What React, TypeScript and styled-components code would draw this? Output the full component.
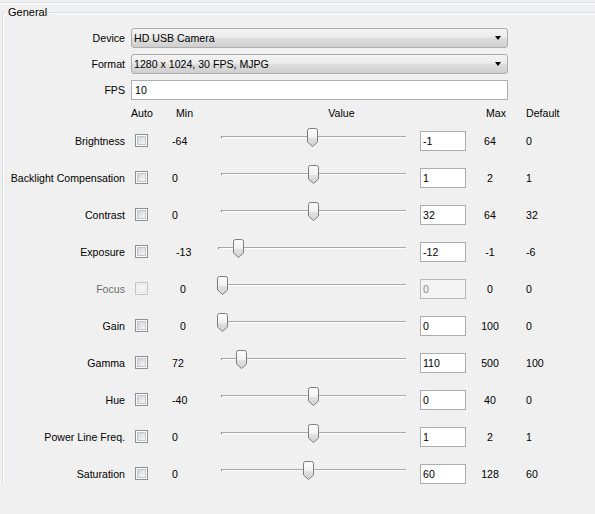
import styled, { createGlobalStyle } from "styled-components";

interface Control {
  label: string;
  min: number;
  value: number;
  max: number;
  def: number;
  disabled?: boolean;
  minPad?: number;
  trackStart?: number;
}

const controls: Control[] = [
  { label: "Brightness", min: -64, value: -1, max: 64, def: 0 },
  { label: "Backlight Compensation", min: 0, value: 1, max: 2, def: 1 },
  { label: "Contrast", min: 0, value: 32, max: 64, def: 32 },
  { label: "Exposure", min: -13, value: -12, max: -1, def: -6, minPad: 10, trackStart: 1 },
  { label: "Focus", min: 0, value: 0, max: 0, def: 0, disabled: true, minPad: 14, trackStart: 0 },
  { label: "Gain", min: 0, value: 0, max: 100, def: 0, minPad: 14, trackStart: 0 },
  { label: "Gamma", min: 72, value: 110, max: 500, def: 100 },
  { label: "Hue", min: -40, value: 0, max: 40, def: 0 },
  { label: "Power Line Freq.", min: 0, value: 1, max: 2, def: 1 },
  { label: "Saturation", min: 0, value: 60, max: 128, def: 60 },
];

const COLUMNS = "128px 35px 51px 203px 46px 48px 1fr";
const SLIDER_CELL = 203;
const SLIDER_RIGHT = 14;
const THUMB_W = 11;

const Thumb = () => (
  <svg width="11" height="19" viewBox="0 0 11 19">
    <defs>
      <linearGradient id="thumbFill" x1="0" y1="0" x2="0" y2="1">
        <stop offset="0" stopColor="#fdfdfd" />
        <stop offset="0.5" stopColor="#f1f1f1" />
        <stop offset="0.56" stopColor="#e0e0e0" />
        <stop offset="1" stopColor="#d2d2d2" />
      </linearGradient>
    </defs>
    <path
      d="M0.5 2.5 Q0.5 0.5 2.5 0.5 H8.5 Q10.5 0.5 10.5 2.5 V14 L5.5 18.5 L0.5 14 Z"
      fill="url(#thumbFill)"
      stroke="#7c7c7c"
    />
  </svg>
);

const ControlRow = ({ c }: { c: Control }) => {
  const start = c.trackStart ?? 4;
  const trackWidth = SLIDER_CELL - SLIDER_RIGHT - start;
  const frac = c.max === c.min ? 0 : (c.value - c.min) / (c.max - c.min);
  const left = Math.round(frac * (trackWidth - THUMB_W));
  return (
    <Row>
      <Label $disabled={c.disabled}>{c.label}</Label>
      <CheckCell>
        <CheckBox $disabled={c.disabled} />
      </CheckCell>
      <MinCell $pad={c.minPad ?? 6}>{c.min}</MinCell>
      <SliderCell $start={start}>
        <Track>
          <ThumbWrap style={{ left }}>
            <Thumb />
          </ThumbWrap>
        </Track>
      </SliderCell>
      <Spin readOnly value={c.value} disabled={c.disabled} />
      <MaxCell>{c.max}</MaxCell>
      <DefCell>{c.def}</DefCell>
    </Row>
  );
};

const App = () => {
  return (
    <Page>
      <GlobalStyle />
      <TopRule />
      <Group>
        <Legend>General</Legend>
        <FormGrid>
          <Label>Device</Label>
          <Combo>
            <span>HD USB Camera</span>
            <Arrow />
          </Combo>
          <Label>Format</Label>
          <Combo>
            <span>1280 x 1024, 30 FPS, MJPG</span>
            <Arrow />
          </Combo>
          <Label>FPS</Label>
          <LineEdit readOnly value="10" />
        </FormGrid>
        <Header>
          <HeadCell $col="2">Auto</HeadCell>
          <HeadCell $col="3" $pad={10}>Min</HeadCell>
          <HeadCell $col="4 / span 2" $center>Value</HeadCell>
          <HeadCell $col="6" $pad={20}>Max</HeadCell>
          <HeadCell $col="7" $pad={12}>Default</HeadCell>
        </Header>
        <Rows>
          {controls.map((c) => (
            <ControlRow key={c.label} c={c} />
          ))}
        </Rows>
      </Group>
    </Page>
  );
};

export default App;

const GlobalStyle = createGlobalStyle`
  html, body {
    margin: 0;
    padding: 0;
    background: #f0f0f0;
  }
  body {
    font-family: "Liberation Sans", Arial, sans-serif;
    font-size: 10.6px;
    color: #000;
  }
`;

const Page = styled.div`
  width: 595px;
  height: 514px;
  overflow: hidden;
  background: #f0f0f0;
`;

const TopRule = styled.div`
  margin-top: 2px;
  height: 1px;
  background: #d5dfe5;
  border-bottom: 1px solid #fff;
`;

const Group = styled.fieldset`
  margin: 2px 0 0 2px;
  padding: 9px 0 1px 0;
  min-width: 0;
  border: 1px solid #d5dfe5;
  border-right: none;
  border-bottom: none;
  border-top-left-radius: 3px;
  box-shadow: inset 1px 1px 0 #fff;
`;

const Legend = styled.legend`
  margin-left: 3px;
  padding: 0 2px;
  line-height: 13px;
  font-size: 11px;
  background: #f0f0f0;
`;

const FormGrid = styled.div`
  display: grid;
  grid-template-columns: 128px 377px;
  grid-auto-rows: 20px;
  row-gap: 6px;
  align-items: center;
`;

const Label = styled.span<{ $disabled?: boolean }>`
  text-align: right;
  padding-right: 6px;
  white-space: nowrap;
  color: ${(p) => (p.$disabled ? "#6d6d6d" : "#000")};
`;

const Combo = styled.div`
  height: 20px;
  box-sizing: border-box;
  border: 1px solid #acacac;
  border-radius: 3px;
  background: linear-gradient(#f3f3f3, #ebebeb 45%, #dddddd 52%, #cfcfcf);
  display: flex;
  align-items: center;
  justify-content: space-between;
  padding: 0 6px 0 2px;
`;

const Arrow = styled.span`
  width: 0;
  height: 0;
  border-left: 3.5px solid transparent;
  border-right: 3.5px solid transparent;
  border-top: 4px solid #000;
`;

const LineEdit = styled.input`
  width: 100%;
  height: 20px;
  box-sizing: border-box;
  margin: 0;
  padding: 0 0 0 3px;
  border: 1px solid #abadb3;
  background: #fff;
  font: inherit;
  color: #000;
  outline: none;
`;

const Header = styled.div`
  display: grid;
  grid-template-columns: ${COLUMNS};
  height: 14px;
  margin-top: 6px;
  align-items: center;
`;

const HeadCell = styled.span<{ $col: string; $pad?: number; $center?: boolean }>`
  grid-column: ${(p) => p.$col};
  grid-row: 1;
  padding-left: ${(p) => p.$pad ?? 0}px;
  text-align: ${(p) => (p.$center ? "center" : "left")};
`;

const Rows = styled.div`
  display: flex;
  flex-direction: column;
  gap: 16px;
  margin-top: 10px;
`;

const Row = styled.div`
  display: grid;
  grid-template-columns: ${COLUMNS};
  height: 21px;
  align-items: center;
`;

const CheckCell = styled.div`
  padding-left: 4px;
  display: flex;
`;

const CheckBox = styled.span<{ $disabled?: boolean }>`
  position: relative;
  width: 13px;
  height: 13px;
  box-sizing: border-box;
  border: 1px solid ${(p) => (p.$disabled ? "#c5c5c5" : "#8e8f8f")};
  background: ${(p) => (p.$disabled ? "#f4f4f4" : "#fff")};

  &::after {
    content: "";
    position: absolute;
    inset: 1px;
    box-sizing: border-box;
    border: 1px solid ${(p) => (p.$disabled ? "#e6e6e6" : "#c2c6cc")};
    background: ${(p) =>
      p.$disabled ? "#f4f4f4" : "linear-gradient(135deg, #d0d4da, #f7f7f7)"};
  }
`;

const MinCell = styled.span<{ $pad: number }>`
  padding-left: ${(p) => p.$pad}px;
`;

const SliderCell = styled.div<{ $start: number }>`
  align-self: start;
  padding: 6px ${SLIDER_RIGHT}px 0 ${(p) => p.$start}px;
`;

const Track = styled.div`
  position: relative;
  height: 0;
  border-top: 1px solid #a9a9a9;
  border-bottom: 1px solid #fff;

  &::before {
    content: "";
    position: absolute;
    left: 0;
    top: -1px;
    width: 1px;
    height: 2px;
    background: #8c8c8c;
  }
`;

const ThumbWrap = styled.span`
  position: absolute;
  top: -9px;
  width: 11px;
  height: 19px;
  display: block;
  line-height: 0;
`;

const Spin = styled.input`
  width: 46px;
  height: 20px;
  box-sizing: border-box;
  margin: 0;
  padding: 0 0 0 2px;
  border: 1px solid #abadb3;
  background: #fff;
  font: inherit;
  color: #000;
  outline: none;

  &:disabled {
    background: #f4f4f4;
    border-color: #b5b9bc;
    color: #8a8a8a;
  }
`;

const MaxCell = styled.span`
  text-align: center;
`;

const DefCell = styled.span`
  padding-left: 12px;
`;
